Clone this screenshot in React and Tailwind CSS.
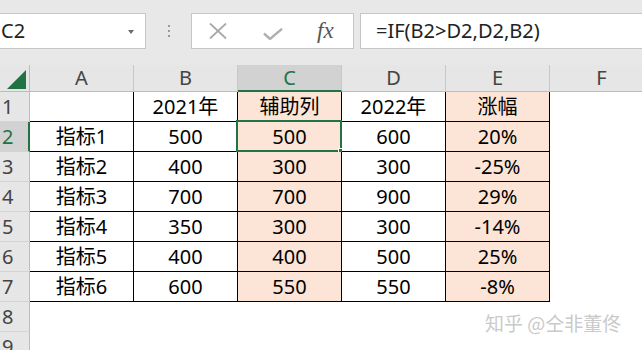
import React from "react";

const cols = ["A", "B", "C", "D", "E", "F"];
const data = [
  ["", "2021年", "辅助列", "2022年", "涨幅"],
  ["指标1", "500", "500", "600", "20%"],
  ["指标2", "400", "300", "300", "-25%"],
  ["指标3", "700", "700", "900", "29%"],
  ["指标4", "350", "300", "300", "-14%"],
  ["指标5", "400", "400", "500", "25%"],
  ["指标6", "600", "550", "550", "-8%"],
];

export default function App() {
  const rows = [];
  for (let r = 1; r <= 9; r++) {
    const sel = r === 2;
    rows.push(
      <div
        key={"h" + r}
        className={
          "h-[30px] border-b border-[#d4d4d4] flex items-center pl-[2px] text-[20px] " +
          (sel
            ? "bg-[#d2d2d2] text-[#217346] border-r-2 border-r-[#217346]"
            : "bg-[#e6e6e6] text-[#444] border-r border-r-[#bdbdbd]")
        }
      >
        {r}
      </div>
    );
    for (let c = 0; c < 6; c++) {
      const inTable = r <= 7 && c <= 4;
      const peach = inTable && (c === 2 || c === 4);
      const text = inTable ? data[r - 1][c] : "";
      const isSel = r === 2 && c === 2;
      rows.push(
        <div
          key={r + "-" + c}
          className={
            "relative h-[30px] flex items-center justify-center text-[20px] text-black " +
            (inTable ? "border-r border-b border-black " : "border-r border-b border-white ") +
            (peach ? "bg-[#fce4d6]" : "bg-white")
          }
        >
          {text}
          {isSel && (
            <>
              <div className="absolute -left-[2px] -top-[2px] -right-px -bottom-px border-2 border-[#217346]" />
              <div className="absolute -right-[4px] -bottom-[4px] w-[7px] h-[7px] bg-[#217346] border border-white" />
            </>
          )}
        </div>
      );
    }
  }

  return (
    <div className="relative w-[642px] h-[350px] overflow-hidden bg-white font-['Noto_Sans','Noto_Sans_CJK_SC',sans-serif]">
      {/* formula bar */}
      <div className="h-[65px] bg-[#e8e8e8] pt-[13px] flex items-start">
        <div className="relative w-[146px] h-[36px] bg-white border border-l-0 border-[#c6c6c6] flex items-center pl-[1px] text-[20px] text-[#222]">
          C2
          <div className="absolute right-[11px] top-[16px] w-0 h-0 border-l-[3px] border-r-[3px] border-t-[4px] border-l-transparent border-r-transparent border-t-[#6a6a6a]" />
        </div>
        <div className="w-[45px] h-[36px] flex flex-col items-center justify-center gap-[3px]">
          <div className="w-[2px] h-[2px] bg-[#9a9a9a]" />
          <div className="w-[2px] h-[2px] bg-[#9a9a9a]" />
          <div className="w-[2px] h-[2px] bg-[#9a9a9a]" />
        </div>
        <div className="w-[163px] h-[36px] bg-white border border-[#c6c6c6] flex items-center pl-[17px]">
          <svg width="18" height="16" viewBox="0 0 18 16">
            <path d="M1 0.5 L17 15.5 M17 0.5 L1 15.5" stroke="#a8a8a8" strokeWidth="1.8" fill="none" />
          </svg>
          <svg width="20" height="12" viewBox="0 0 20 12" className="ml-[36px] mt-[5px]">
            <path d="M1 5.5 L7 11 L19 0.8" stroke="#b0b0b0" strokeWidth="2.4" fill="none" />
          </svg>
          <span className="ml-[34px] font-['Liberation_Serif',serif] italic text-[23px] text-[#555] leading-none -mt-[2px]">
            fx
          </span>
        </div>
        <div className="w-[6px]" />
        <div className="flex-1 h-[36px] bg-white border border-r-0 border-[#c6c6c6] flex items-center pl-[15px] text-[20px] text-[#222]">
          =IF(B2&gt;D2,D2,B2)
        </div>
      </div>

      {/* sheet grid */}
      <div className="grid grid-cols-[30px_104px_104px_104px_104px_104px_104px]">
        <div className="h-[27px] bg-[#e6e6e6] border-r border-b border-[#bdbdbd] relative">
          <svg width="30" height="27" viewBox="0 0 30 27" className="absolute left-0 top-0">
            <polygon points="26,5 26,24 7,24" fill="#217346" />
          </svg>
        </div>
        {cols.map((c) => (
          <div
            key={c}
            className={
              "h-[27px] flex items-center justify-center text-[20px] border-r border-r-[#c8c8c8] " +
              (c === "C"
                ? "bg-[#d2d2d2] text-[#217346] border-b-2 border-b-[#217346]"
                : "bg-[#e6e6e6] text-[#444] border-b border-b-[#bdbdbd]")
            }
          >
            {c}
          </div>
        ))}
        {rows}
      </div>

      <div className="absolute left-[485px] top-[310px] leading-[26px] text-[19px] text-[#cacaca] font-['Noto_Sans_CJK_SC',sans-serif] [text-shadow:0_0_1px_#ffffff]">
        知乎 @仝非董佟
      </div>
    </div>
  );
}
